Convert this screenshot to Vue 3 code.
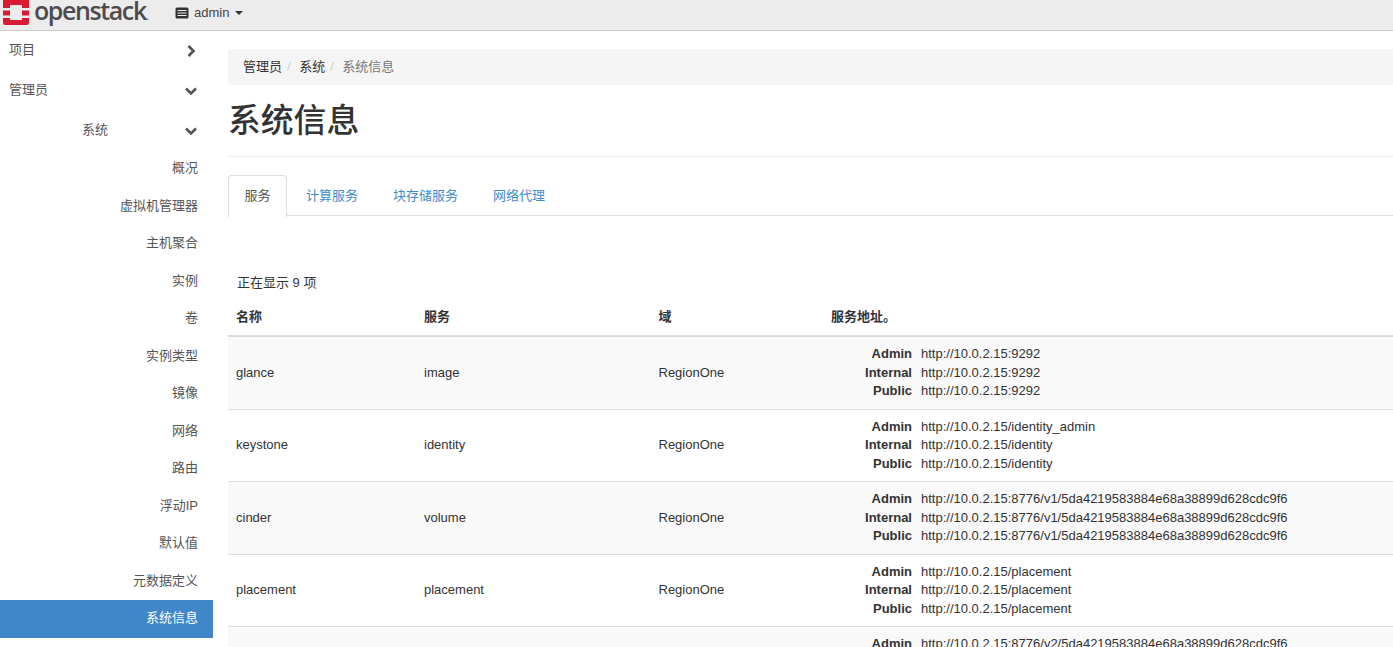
<script setup>
const navItems = [
  { label: '概况' },
  { label: '虚拟机管理器' },
  { label: '主机聚合' },
  { label: '实例' },
  { label: '卷' },
  { label: '实例类型' },
  { label: '镜像' },
  { label: '网络' },
  { label: '路由' },
  { label: '浮动IP' },
  { label: '默认值' },
  { label: '元数据定义' },
  { label: '系统信息', active: true },
]

const tabs = ['服务', '计算服务', '块存储服务', '网络代理']

const v1 = 'http://10.0.2.15:8776/v1/5da4219583884e68a38899d628cdc9f6'
const v2 = 'http://10.0.2.15:8776/v2/5da4219583884e68a38899d628cdc9f6'

const same = (url) => ({ Admin: url, Internal: url, Public: url })

const services = [
  { name: 'glance', type: 'image', urls: same('http://10.0.2.15:9292') },
  {
    name: 'keystone',
    type: 'identity',
    urls: {
      Admin: 'http://10.0.2.15/identity_admin',
      Internal: 'http://10.0.2.15/identity',
      Public: 'http://10.0.2.15/identity',
    },
  },
  { name: 'cinder', type: 'volume', urls: same(v1) },
  { name: 'placement', type: 'placement', urls: same('http://10.0.2.15/placement') },
  { name: 'cinderv2', type: 'volumev2', urls: same(v2) },
]
</script>

<template>
  <div class="page">
    <header class="navbar">
      <div class="brand">
        <svg class="logo-mark" viewBox="0 0 26 25" width="26" height="25">
          <path fill="#da1a32" d="M0 0h26v8h-7V5H7v3H0z" />
          <path fill="#da1a32" d="M0 10.500h7v5H0zM19 10.500h7v5h-7z" />
          <path fill="#da1a32" d="M0 18h7v2h12v-2h7v5a2 2 0 0 1-2 2H2a2 2 0 0 1-2-2z" />
        </svg>
        <span class="logo-text">openstack<small>.</small></span>
      </div>
      <div class="project-menu">
        <svg viewBox="0 0 14 12" width="14" height="12">
          <rect x="0.5" y="0.5" width="13" height="11" rx="1.5" fill="#333" />
          <path d="M2.500 3.500h9M2.500 6h9M2.500 8.500h9" stroke="#ececec" stroke-width="1" />
        </svg>
        <span>admin</span>
        <i class="caret"></i>
      </div>
    </header>

    <div class="body-wrap">
      <aside class="sidebar">
        <div class="nav-top">
          <span>项目</span>
          <svg class="chev right" viewBox="0 0 9 14" width="9" height="14">
            <path d="M1.500 2l5 5-5 5" fill="none" stroke="#555" stroke-width="2.600" />
          </svg>
        </div>
        <div class="nav-top">
          <span>管理员</span>
          <svg class="chev" viewBox="0 0 14 10" width="14" height="10">
            <path d="M2 2.500l5 5 5-5" fill="none" stroke="#555" stroke-width="2.600" />
          </svg>
        </div>
        <div class="nav-group">
          <span class="group-label">系统</span>
          <svg class="chev" viewBox="0 0 14 10" width="14" height="10">
            <path d="M2 2.500l5 5 5-5" fill="none" stroke="#555" stroke-width="2.600" />
          </svg>
        </div>
        <a v-for="item in navItems" :key="item.label" class="nav-item" :class="{ active: item.active }">
          {{ item.label }}
        </a>
      </aside>

      <main class="content">
        <ol class="breadcrumb">
          <li>管理员</li>
          <li>系统</li>
          <li class="current">系统信息</li>
        </ol>
        <h1 class="page-title">系统信息</h1>

        <ul class="tabs">
          <li v-for="(tab, i) in tabs" :key="tab" :class="{ active: i === 0 }">{{ tab }}</li>
        </ul>

        <div class="count">正在显示 9 项</div>

        <table class="services">
          <thead>
            <tr>
              <th class="c-name">名称</th>
              <th class="c-type">服务</th>
              <th class="c-region">域</th>
              <th>服务地址。</th>
            </tr>
          </thead>
          <tbody>
            <tr v-for="svc in services" :key="svc.name">
              <td>{{ svc.name }}</td>
              <td>{{ svc.type }}</td>
              <td>RegionOne</td>
              <td class="urls">
                <div v-for="(url, kind) in svc.urls" :key="kind" class="url-row">
                  <b>{{ kind }}</b>
                  <span>{{ url }}</span>
                </div>
              </td>
            </tr>
          </tbody>
        </table>
      </main>
    </div>
  </div>
</template>

<style scoped>
.page {
  height: 647px;
  overflow: hidden;
  font-family: "Liberation Sans", "Noto Sans CJK SC", sans-serif;
  font-size: 13px;
  line-height: 18.500px;
  color: #333;
  background: #fff;
}
.navbar {
  display: flex;
  align-items: center;
  height: 30px;
  background: #ececec;
  border-bottom: 1px solid #c9c9c9;
  box-sizing: content-box;
}
.brand {
  display: flex;
  align-items: flex-start;
  width: 175px;
  height: 30px;
  padding-left: 3px;
  box-sizing: border-box;
}
.logo-mark {
  flex: none;
}
.logo-text {
  margin-left: 5px;
  margin-top: -2px;
  font-family: "Open Sans", sans-serif;
  font-size: 25px;
  font-weight: 600;
  line-height: 24px;
  letter-spacing: -1.400px;
  color: #4e4b4c;
}
.logo-text small {
  font-size: 12px;
  color: #8a8a8a;
}
.project-menu {
  display: flex;
  align-items: center;
  gap: 5px;
  margin-top: -4px;
  color: #444;
}
.caret {
  width: 0;
  height: 0;
  margin-left: 1px;
  border-top: 4px solid #333;
  border-left: 4px solid transparent;
  border-right: 4px solid transparent;
}
.body-wrap {
  display: flex;
}
.sidebar {
  flex: none;
  width: 213px;
  color: #555;
}
.nav-top,
.nav-group {
  display: flex;
  align-items: center;
  justify-content: space-between;
  height: 40px;
  padding: 0 15px 1px 9px;
  box-sizing: border-box;
}
.nav-group {
  height: 39px;
  padding: 0 15px 0 82px;
}
.chev.right {
  margin-right: 2px;
}
.group-label {
  display: block;
}
.nav-item {
  display: block;
  height: 37.500px;
  line-height: 36.750px;
  padding-right: 15px;
  text-align: right;
  color: #555;
}
.nav-item.active {
  background: #3f87c9;
  color: #fff;
}
.content {
  flex: 1;
  min-width: 0;
  margin-left: 15px;
}
.breadcrumb {
  display: flex;
  list-style: none;
  margin: 18px 0 0;
  padding: 1px 15px 0;
  height: 36px;
  box-sizing: border-box;
  align-items: center;
  background: #f5f5f5;
  border-radius: 4px 0 0 4px;
}
.breadcrumb li:not(.current)::after {
  content: "/";
  padding: 0 8.500px 0 5px;
  color: #ccc;
}
.breadcrumb .current {
  color: #777;
}
.page-title {
  margin: 0;
  height: 71px;
  line-height: 71px;
  font-size: 32.800px;
  font-weight: 500;
  border-bottom: 1px solid #eee;
}
.tabs {
  display: flex;
  list-style: none;
  margin: 18px 0 0;
  padding: 0;
  height: 40px;
  border-bottom: 1px solid #ddd;
  color: #428bca;
}
.tabs li {
  padding: 0 15px;
  margin-right: 3px;
  line-height: 39px;
  border: 1px solid transparent;
  border-bottom: none;
}
.tabs li.active {
  height: 41px;
  padding: 0 15.500px;
  color: #555;
  background: #fff;
  border-color: #ddd;
  border-radius: 4px 4px 0 0;
}
.count {
  margin-top: 58px;
  padding-left: 9px;
}
.services {
  width: 100%;
  margin-top: 3.500px;
  border-collapse: collapse;
  table-layout: fixed;
}
.services th {
  height: 36px;
  padding: 3px 8px 0;
  text-align: left;
  font-weight: 700;
  border-bottom: 2px solid #ddd;
}
.c-name {
  width: 172px;
}
.c-type {
  width: 218.500px;
}
.c-region {
  width: 156.500px;
}
.services td {
  padding: 8px;
  border-bottom: 1px solid #ddd;
  vertical-align: middle;
}
.services tbody tr:nth-child(odd) {
  background: #f9f9f9;
}
.url-row {
  display: flex;
  gap: 9px;
}
.url-row b {
  flex: none;
  width: 81px;
  text-align: right;
}
</style>

<style>
html, body {
  margin: 0;
  background: #fff;
  overflow: hidden;
}
</style>
